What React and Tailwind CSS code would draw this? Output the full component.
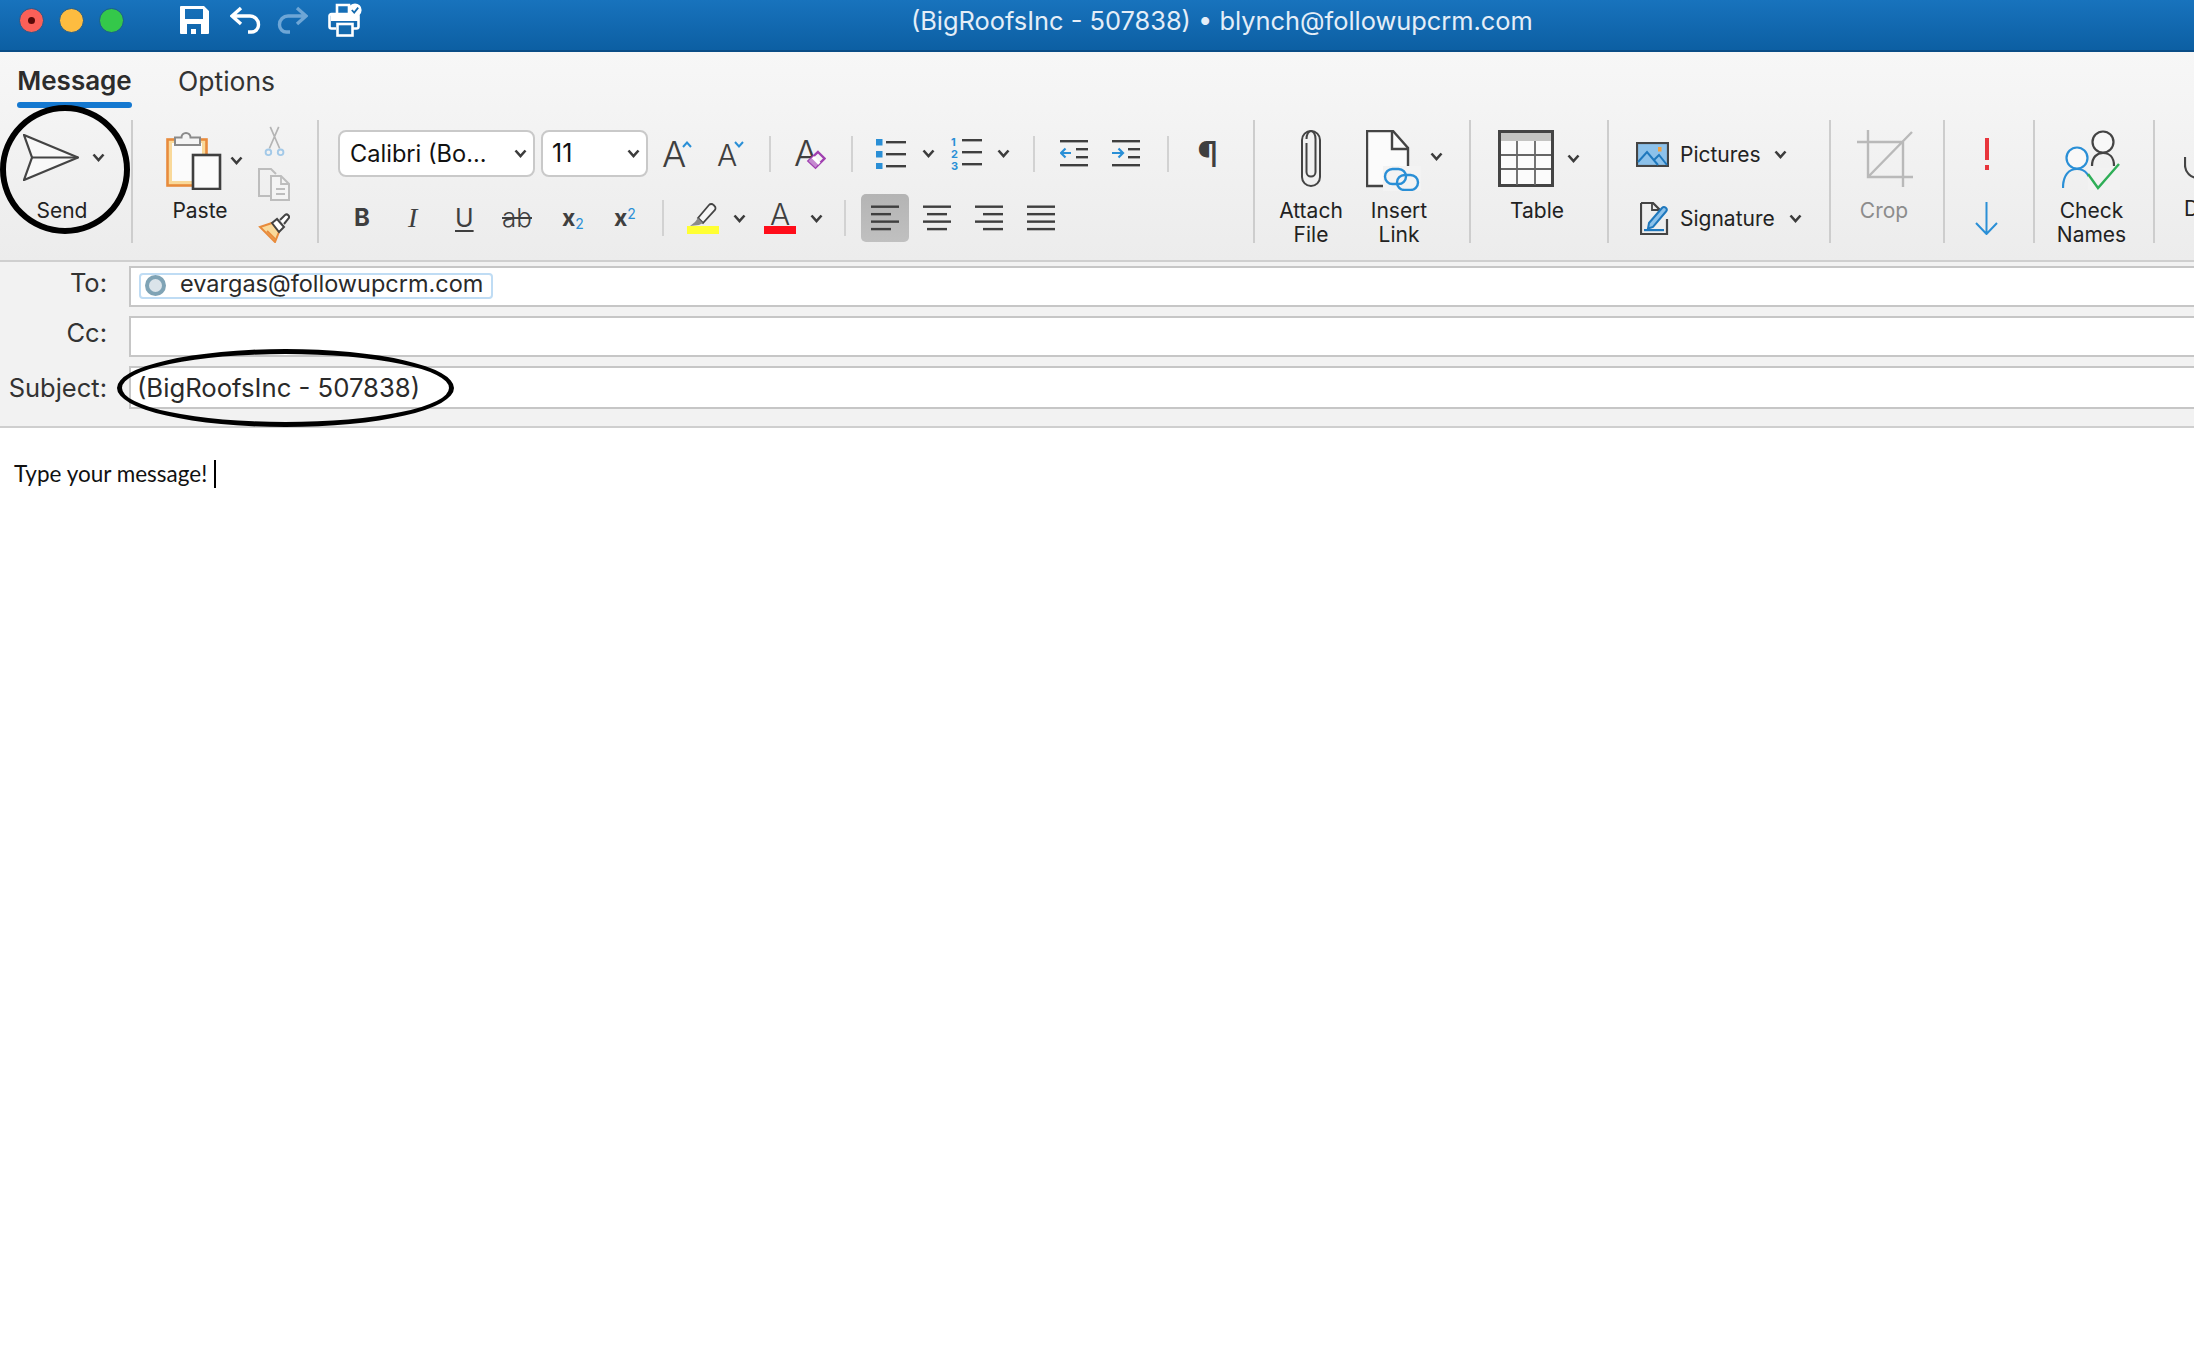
const stroke = '#444444';

const Chevron = ({ className = '' }) => (
  <svg width="13" height="9" viewBox="0 0 13 9" className={`shrink-0 ${className}`}>
    <polyline points="1.5,1.5 6.5,7 11.5,1.5" fill="none" stroke="#3c3c3c" strokeWidth="2.6" />
  </svg>
);

const Sep = () => <div className="w-[2px] h-[123px] shrink-0 bg-[#cdcdcd]" />;
const SmallSep = ({ className = '' }) => <div className={`w-[2px] h-[36px] shrink-0 bg-[#d2d2d2] ${className}`} />;

const SaveIcon = () => (
  <svg width="29" height="28" viewBox="0 0 29 28" className="ml-[56px] shrink-0">
    <path fillRule="evenodd" fill="#fff" d="M1 0h23l5 5v22a1 1 0 0 1-1 1H1a1 1 0 0 1-1-1V1a1 1 0 0 1 1-1zM5 3v10h18V3zM7 18v10h4v-5h5v5h5V18z" />
  </svg>
);

const UndoIcon = ({ color = '#fff', flip = false, className = '' }) => (
  <svg width="31" height="28" viewBox="0 0 31 28" className={`shrink-0 ${flip ? '-scale-x-100' : ''} ${className}`}>
    <path d="M11 2L2 10l9 8M2 10h18a8.5 8.5 0 0 1 8.5 8.5V19a7 7 0 0 1-7 7H18" fill="none" stroke={color} strokeWidth="3.4" />
  </svg>
);

const PrinterIcon = () => (
  <svg width="34" height="34" viewBox="0 0 34 34" className="ml-[20px] shrink-0">
    <path d="M9 11V2h12v9" fill="none" stroke="#fff" strokeWidth="2.6" />
    <path fill="none" stroke="#fff" strokeWidth="2.6" d="M8 25.500H3.500a2 2 0 0 1-2-2V13a2 2 0 0 1 2-2h25a2 2 0 0 1 2 2v10.500a2 2 0 0 1-2 2H25" />
    <path fill="#fff" d="M3 12h27v6H3z" />
    <rect x="9.5" y="21" width="15" height="11.5" fill="#146aae" stroke="#fff" strokeWidth="2.6" />
    <circle cx="27" cy="7" r="6.6" fill="#fff" />
    <polyline points="23.8,7 26.2,9.6 30.2,4.6" fill="none" stroke="#146aae" strokeWidth="1.8" />
  </svg>
);

const SendIcon = () => (
  <svg width="56" height="47" viewBox="0 0 56 47" className="shrink-0">
    <path d="M1 1l54 22.5L1 46l8-22.5z" fill="#f9f9f9" stroke={stroke} strokeWidth="2.2" strokeLinejoin="miter" />
    <path d="M9 23.5h46" stroke={stroke} strokeWidth="2.2" />
  </svg>
);

const PasteIcon = () => (
  <svg width="56" height="60" viewBox="0 0 56 60" className="shrink-0">
    <rect x="1.5" y="9.5" width="39" height="46" fill="#f9d99a" stroke="#e88b3c" strokeWidth="2.6" />
    <rect x="6" y="13" width="30" height="38" fill="#fbfbfb" />
    <path d="M9 15V7.5h6.5a4.5 4.5 0 0 1 9 0H34V15z" fill="#f4f4f4" stroke="#8a8a8a" strokeWidth="2" />
    <rect x="27" y="25" width="27" height="34" fill="#fbfbfb" stroke="#3f3f3f" strokeWidth="2.6" />
  </svg>
);

const ScissorsIcon = () => (
  <svg width="21" height="32" viewBox="0 0 21 32">
    <path d="M5 24L15 1M16 24L6 1" fill="none" stroke="#b4b4b4" strokeWidth="1.8" />
    <circle cx="4" cy="28" r="3" fill="none" stroke="#a3c9e8" strokeWidth="2" />
    <circle cx="17" cy="28" r="3" fill="none" stroke="#a3c9e8" strokeWidth="2" />
  </svg>
);

const CopyIcon = () => (
  <svg width="32" height="33" viewBox="0 0 32 33">
    <path d="M13 28H1V1h12l5 5" fill="none" stroke="#bdbdbd" strokeWidth="2" />
    <path d="M13 8h10l8 8v16H13z" fill="#f4f4f4" stroke="#bdbdbd" strokeWidth="2" />
    <path d="M23 8v8h8M18 21h9M18 26h9" fill="none" stroke="#bdbdbd" strokeWidth="1.8" />
  </svg>
);

const BrushIcon = () => (
  <svg width="32" height="30" viewBox="0 0 32 30">
    <path d="M2 14l12-4 7 9-4 10z" fill="#f9d99a" stroke="#e88b3c" strokeWidth="2" />
    <path d="M9 18l9 9" stroke="#e88b3c" strokeWidth="2" />
    <path d="M14 10l5-4 7 8-5 5z" fill="#fff" stroke="#444" strokeWidth="2" />
    <path d="M22 7l5-5a2.5 2.5 0 0 1 3.5 3.5L26 11" fill="#fff" stroke="#444" strokeWidth="2" />
  </svg>
);

const ListIcon = ({ widths }) => (
  <svg width="28" height="26" viewBox="0 0 28 26" className="shrink-0">
    {widths.map(([x, w], i) => (
      <rect key={i} x={x} y={i * (22.4 / (widths.length - 1)) + 0.5} width={w} height="2.4" fill="#3f3f3f" />
    ))}
  </svg>
);

const BulletsIcon = () => (
  <svg width="30" height="30" viewBox="0 0 30 30" className="shrink-0">
    {[0, 12, 24].map((y) => (
      <g key={y}>
        <rect x="0" y={y} width="6.5" height="6.5" fill="#2a8fd6" />
        <rect x="10" y={y + 2} width="20" height="2.4" fill="#3f3f3f" />
      </g>
    ))}
  </svg>
);

const NumberedIcon = () => (
  <svg width="31" height="34" viewBox="0 0 31 34" className="shrink-0 overflow-visible">
    {[0, 12, 24].map((y, i) => (
      <g key={y}>
        <text x="0" y={y + 9} fontSize="11" fontWeight="700" fontFamily="Inter, sans-serif" fill="#2a8fd6">{i + 1}</text>
        <rect x="11" y={y + 2} width="20" height="2.4" fill="#3f3f3f" />
      </g>
    ))}
  </svg>
);

const IndentIcon = ({ flip = false, className = '' }) => (
  <svg width="28" height="27" viewBox="0 0 28 27" className={`shrink-0 ${className}`}>
    <rect x="0" y="0" width="28" height="2.4" fill="#3f3f3f" />
    <rect x="16" y="8" width="12" height="2.4" fill="#3f3f3f" />
    <rect x="16" y="16" width="12" height="2.4" fill="#3f3f3f" />
    <rect x="0" y="24" width="28" height="2.4" fill="#3f3f3f" />
    {flip ? (
      <path d="M0 13h11M6.500 8.500L11 13l-4.500 4.500" fill="none" stroke="#2a8fd6" strokeWidth="2.2" />
    ) : (
      <path d="M11 13H1M5.500 8.500L1 13l4.500 4.500" fill="none" stroke="#2a8fd6" strokeWidth="2.2" />
    )}
  </svg>
);

const HighlightIcon = () => (
  <svg width="32" height="32" viewBox="0 0 32 32" className="shrink-0">
    <path d="M11 16L22 3a3 3 0 0 1 4.500 0l1 1a3 3 0 0 1 0 4.500L16 21z" fill="#f6f6f6" stroke="#444" strokeWidth="1.8" />
    <path d="M11 16l5 5-4 2-9 1 5-4z" fill="#8a8a8a" />
    <rect x="0" y="24" width="32" height="8" fill="#ffff33" />
  </svg>
);

const ClearIcon = () => (
  <div className="relative w-[32px] h-[32px] ml-[23px] shrink-0">
    <span className="block text-[36px] leading-[30px] font-light text-[#3f3f3f]">A</span>
    <svg width="20" height="20" viewBox="0 0 20 20" className="absolute right-0 bottom-0">
      <path d="M12 2l6.500 6.500-9 9L2.500 11z" fill="#f4f4f4" stroke="#a040b0" strokeWidth="2.4" />
      <path d="M8 6l6.500 6.500-2.500 2.500L5.500 8.500z" fill="#fff" />
      <path d="M2.500 11l3-3 6.500 6.500-2.500 3z" fill="#c58bd0" />
    </svg>
  </div>
);

const Paperclip = () => (
  <svg width="20" height="57" viewBox="0 0 20 57" className="shrink-0">
    <path d="M5.500 13v29a4.500 4.500 0 0 0 9 0V9a4.500 8 0 0 0-9 0M1 14v33a9 9 0 0 0 18 0V15" fill="none" stroke={stroke} strokeWidth="2" />
    <path d="M1 14V10a9 9 0 0 1 9-9 9 9 0 0 1 9 9v6" fill="none" stroke={stroke} strokeWidth="2" />
  </svg>
);

const LinkDoc = () => (
  <svg width="55" height="61" viewBox="0 0 55 61" className="shrink-0">
    <path d="M1 1h26l15 17v38H1z" fill="#fbfbfb" stroke={stroke} strokeWidth="2.4" />
    <path d="M26 1v18h16" fill="none" stroke={stroke} strokeWidth="2.4" />
    <rect x="17" y="36" width="38" height="25" fill="#f3f3f3" />
    <rect x="19" y="39" width="21" height="15" rx="7.500" fill="none" stroke="#2a8fd6" strokeWidth="2.4" />
    <rect x="31" y="45" width="21" height="15" rx="7.500" fill="none" stroke="#2a8fd6" strokeWidth="2.4" />
  </svg>
);

const TableIcon = () => (
  <svg width="56" height="57" viewBox="0 0 56 57" className="shrink-0">
    <rect x="1.500" y="1.500" width="53" height="54" fill="#fbfbfb" stroke={stroke} strokeWidth="3" />
    <rect x="3" y="3" width="50" height="8" fill="#c4c4c2" />
    <path d="M19 11v44M37 11v44M3 25h50M3 39h50" stroke="#666" strokeWidth="1.800" />
  </svg>
);

const PicturesIcon = () => (
  <svg width="33" height="25" viewBox="0 0 33 25" className="shrink-0">
    <rect x="1" y="1" width="31" height="23" fill="#8cc1ea" stroke={stroke} strokeWidth="2.200" />
    <path d="M2 20l9-10 11 13M18 18l5-5 8 10" fill="none" stroke="#1f78bd" strokeWidth="2" />
    <rect x="22" y="5" width="3.500" height="4.500" fill="#f0a040" />
  </svg>
);

const SignatureIcon = () => (
  <svg width="29" height="33" viewBox="0 0 29 33" className="shrink-0">
    <path d="M1 1h12l6 6v3M27 17v15H1V1" fill="none" stroke={stroke} strokeWidth="2.200" />
    <path d="M12 1v7h7" fill="none" stroke={stroke} strokeWidth="1.800" />
    <path d="M9 21L22 6a2.500 2.500 0 0 1 4 3.500L13 25l-5 1.500z" fill="#8cc1ea" stroke="#1f78bd" strokeWidth="2" />
    <rect x="4" y="27" width="20" height="2.200" fill="#1f78bd" />
  </svg>
);

const CropIcon = () => (
  <svg width="56" height="57" viewBox="0 0 56 57">
    <path d="M11 0v47h47M0 12h46v45M11 47L55 2" fill="none" stroke="#b9b9b9" strokeWidth="2.400" />
  </svg>
);

const CheckNames = () => (
  <svg width="59" height="60" viewBox="0 0 59 60" className="shrink-0">
    <circle cx="41" cy="12" r="10.500" fill="#f8f8f8" stroke={stroke} strokeWidth="2.200" />
    <path d="M30 36c0-9 5-13 11-13s11 4 11 13" fill="none" stroke={stroke} strokeWidth="2.200" />
    <circle cx="15" cy="28" r="10.500" fill="#f8f8f8" stroke="#2a8fd6" strokeWidth="2.200" />
    <path d="M1 58c0-13 6-19 14-19s14 6 14 19" fill="none" stroke="#2a8fd6" strokeWidth="2.200" />
    <rect x="26" y="38" width="32" height="22" fill="#f2f2f2" />
    <polyline points="26,44 36,58 57,34" fill="none" stroke="#2fae57" strokeWidth="2.400" />
  </svg>
);

const MicIcon = () => (
  <svg width="30" height="26" viewBox="0 0 30 26">
    <path d="M1 0v8a13 13 0 0 0 26 0V0" fill="none" stroke={stroke} strokeWidth="2.200" />
  </svg>
);

const Label = ({ children, className = 'text-[#222]' }) => (
  <span className={`block text-[21px] leading-[24px] text-center whitespace-pre-line ${className}`}>{children}</span>
);

const Field = ({ label, children, height, labelClass = '' }) => (
  <div className={`flex items-center ${height}`}>
    <span className={`w-[107px] text-right text-[25.5px] text-[#333] shrink-0 ${labelClass}`}>{label}</span>
    <div className="ml-[22px] flex-1 h-full flex items-center bg-white border-2 border-[#c6c6c6] border-r-0">{children}</div>
  </div>
);

export default function App() {
  return (
    <div className="relative h-screen w-full overflow-hidden flex flex-col bg-white font-['Inter',sans-serif]">
      {/* title bar */}
      <div className="h-[52px] shrink-0 flex items-center bg-linear-to-b from-[#1873bd] to-[#0c5fa3] border-b-2 border-[#0a4d87]">
        <div className="w-[911px] shrink-0 flex items-center pl-[19px] -mt-[10px]">
          <div className="flex gap-[15px] items-center">
            <div className="w-[25px] h-[25px] rounded-full bg-[#fb6058] border border-[#1a5a90] flex items-center justify-center">
              <div className="w-[7px] h-[7px] rounded-full bg-[#5a0a08]" />
            </div>
            <div className="w-[25px] h-[25px] rounded-full bg-[#fdbc40] border border-[#1a5a90]" />
            <div className="w-[25px] h-[25px] rounded-full bg-[#34c84a] border border-[#1a5a90]" />
          </div>
          <SaveIcon />
          <UndoIcon className="ml-[21px]" />
          <UndoIcon color="#6ea6d6" flip className="ml-[16px]" />
          <PrinterIcon />
        </div>
        <span className="text-[25.4px] text-[#e4eef8] whitespace-nowrap -mt-[8px]">(BigRoofsInc - 507838) • blynch@followupcrm.com</span>
      </div>

      {/* ribbon */}
      <div className="h-[210px] shrink-0 bg-linear-to-b from-[#f7f7f7] to-[#ececec] border-b-2 border-[#cfcfcf]">
        <div className="flex h-[56px] pl-[17px]">
          <div className="flex flex-col w-[115px] items-center">
            <span className="mt-[15px] text-[26px] leading-[28px] font-semibold text-[#2c2c2c] whitespace-nowrap">Message</span>
            <div className="mt-[7px] h-[6px] w-[115px] rounded-full bg-[#1478d0]" />
          </div>
          <span className="ml-[46px] mt-[15px] text-[26.5px] leading-[28px] text-[#333]">Options</span>
        </div>

        <div className="flex mt-[12px] h-[123px]">
          {/* send */}
          <div className="w-[131px] shrink-0 pt-[14px] pl-[23px]">
            <div className="flex items-center h-[47px]">
              <SendIcon />
              <Chevron className="ml-[13px]" />
            </div>
            <div className="mt-[18px] w-[64px] ml-[11px] -translate-x-[4px]"><Label>Send</Label></div>
          </div>
          <Sep />

          {/* clipboard */}
          <div className="w-[184px] shrink-0 flex pl-[33px]">
            <div className="w-[94px] shrink-0 pt-[10px]">
              <div className="flex items-center h-[60px]">
                <PasteIcon />
                <Chevron className="ml-[8px]" />
              </div>
              <div className="mt-[9px] w-[60px] ml-[4px]"><Label>Paste</Label></div>
            </div>
            <div className="flex flex-col pt-[6px] items-center w-[32px] -ml-[2px]">
              <ScissorsIcon />
              <div className="mt-[12px]"><CopyIcon /></div>
              <div className="mt-[12px]"><BrushIcon /></div>
            </div>
          </div>
          <Sep />

          {/* font and paragraph */}
          <div className="w-[934px] shrink-0 pt-[10px]">
            <div className="flex items-center h-[47px] pl-[19px]">
              <div className="w-[197px] h-[47px] shrink-0 flex items-center justify-between bg-white border-2 border-[#c9c9c9] rounded-[8px] pl-[10px] pr-[6px]">
                <span className="text-[23.6px] text-[#111] whitespace-nowrap">Calibri (Bo...</span>
                <Chevron />
              </div>
              <div className="ml-[6px] w-[107px] h-[47px] shrink-0 flex items-center justify-between bg-white border-2 border-[#c9c9c9] rounded-[8px] pl-[9px] pr-[6px]">
                <span className="text-[25px] text-[#111]">11</span>
                <Chevron />
              </div>
              <div className="ml-[14px] w-[30px] h-[30px] shrink-0 relative">
                <span className="block text-[36px] leading-[30px] font-light text-[#3f3f3f]">A</span>
                <svg width="10" height="7" viewBox="0 0 10 7" className="absolute right-0 top-[2px]"><polyline points="1,6 5,1.500 9,6" fill="none" stroke="#2a8fd6" strokeWidth="2" /></svg>
              </div>
              <div className="ml-[25px] w-[27px] h-[30px] shrink-0 relative">
                <span className="block text-[30px] leading-[32px] font-light text-[#3f3f3f]">A</span>
                <svg width="10" height="7" viewBox="0 0 10 7" className="absolute right-0 top-[2px]"><polyline points="1,1 5,5.500 9,1" fill="none" stroke="#2a8fd6" strokeWidth="2" /></svg>
              </div>
              <SmallSep className="ml-[25px]" />
              <ClearIcon />
              <SmallSep className="ml-[25px]" />
              <div className="ml-[23px]"><BulletsIcon /></div>
              <Chevron className="ml-[16px]" />
              <div className="ml-[16px]"><NumberedIcon /></div>
              <Chevron className="ml-[15px]" />
              <SmallSep className="ml-[23px]" />
              <IndentIcon className="ml-[25px]" />
              <IndentIcon flip className="ml-[24px]" />
              <SmallSep className="ml-[27px]" />
              <span className="ml-[28px] text-[36px] leading-[30px] font-normal text-[#3f3f3f]">¶</span>
            </div>

            <div className="flex items-center h-[48px] mt-[17px] text-[#3f3f3f]">
              <span className="ml-[35px] w-[17px] text-[24px] font-bold leading-none">B</span>
              <span className="ml-[37px] w-[13px] text-[28px] italic leading-none font-['Liberation_Serif',serif]">I</span>
              <span className="ml-[34px] w-[20px] text-[25px] underline underline-offset-[3px] leading-none">U</span>
              <span className="ml-[25px] w-[34px] text-[26px] font-light line-through leading-none text-center">ab</span>
              <span className="ml-[28px] w-[22px] text-[23px] font-bold leading-none">x<sub className="text-[14px] font-normal text-[#2a8fd6]">2</sub></span>
              <span className="ml-[30px] w-[22px] text-[23px] font-bold leading-none">x<sup className="text-[14px] font-normal text-[#2a8fd6]">2</sup></span>
              <SmallSep className="ml-[26px]" />
              <div className="ml-[23px]"><HighlightIcon /></div>
              <Chevron className="ml-[14px]" />
              <div className="ml-[18px] w-[32px] h-[32px] flex flex-col items-center shrink-0">
                <span className="text-[30px] leading-[24px] font-light">A</span>
                <div className="w-[32px] h-[8px] bg-[#ff0d1a]" />
              </div>
              <Chevron className="ml-[14px]" />
              <SmallSep className="ml-[21px]" />
              <div className="ml-[15px] w-[48px] h-[48px] shrink-0 flex items-center justify-center rounded-[5px] bg-linear-to-b from-[#b4b4b4] to-[#c0c0c0]">
                <ListIcon widths={[[0, 28], [0, 20], [0, 28], [0, 20]]} />
              </div>
              <div className="ml-[14px]"><ListIcon widths={[[0, 28], [4, 20], [0, 28], [4, 20]]} /></div>
              <div className="ml-[24px]"><ListIcon widths={[[0, 28], [8, 20], [0, 28], [8, 20]]} /></div>
              <div className="ml-[24px]"><ListIcon widths={[[0, 28], [0, 28], [0, 28], [0, 28]]} /></div>
            </div>
          </div>
          <Sep />

          {/* attach and link */}
          <div className="w-[214px] shrink-0 pt-[10px] flex">
            <div className="w-[92px] ml-[10px] flex flex-col items-center shrink-0">
              <div className="h-[57px]"><Paperclip /></div>
              <div className="mt-[12px]"><Label>{'Attach\nFile'}</Label></div>
            </div>
            <div className="ml-[9px] shrink-0">
              <div className="flex h-[61px] items-center">
                <LinkDoc />
                <Chevron className="ml-[9px] -mt-[8px]" />
              </div>
              <div className="mt-[8px] w-[66px]"><Label>{'Insert\nLink'}</Label></div>
            </div>
          </div>
          <Sep />

          {/* table */}
          <div className="w-[136px] shrink-0 pt-[10px] pl-[27px]">
            <div className="flex items-center h-[57px]">
              <TableIcon />
              <Chevron className="ml-[13px]" />
            </div>
            <div className="mt-[12px] w-[56px] ml-[11px]"><Label>Table</Label></div>
          </div>
          <Sep />

          {/* pictures, signature */}
          <div className="w-[220px] shrink-0 pt-[22px]">
            <div className="flex items-center h-[25px] pl-[27px]">
              <PicturesIcon />
              <span className="ml-[11px] text-[21px] text-[#222] w-[81px]">Pictures</span>
              <Chevron className="ml-[13px]" />
            </div>
            <div className="flex items-center h-[33px] pl-[31px] mt-[35px]">
              <SignatureIcon />
              <span className="ml-[11px] text-[21px] text-[#222] w-[96px]">Signature</span>
              <Chevron className="ml-[13px]" />
            </div>
          </div>
          <Sep />

          {/* crop */}
          <div className="w-[112px] shrink-0 pt-[10px] pl-[26px]">
            <CropIcon />
            <div className="mt-[12px] w-[52px] ml-[1px]"><Label className="text-[#8c8c8c]">Crop</Label></div>
          </div>
          <Sep />

          {/* importance */}
          <div className="w-[88px] shrink-0 flex flex-col items-center pt-[18px] pr-[5px]">
            <svg width="6" height="32" viewBox="0 0 6 32"><path d="M1 0h4v22H1zM1 27h4v5H1z" fill="#e8353c" /></svg>
            <svg width="23" height="33" viewBox="0 0 23 33" className="mt-[32px]"><path d="M11.500 0v31M1 21l10.500 11L22 21" fill="none" stroke="#2a8fd6" strokeWidth="2" /></svg>
          </div>
          <Sep />

          {/* check names */}
          <div className="w-[118px] shrink-0 flex flex-col items-center pt-[10px] pr-[5px]">
            <CheckNames />
            <div className="mt-[9px]"><Label>{'Check\nNames'}</Label></div>
          </div>
          <Sep />

          {/* dictate, runs off the window */}
          <div className="shrink-0 pl-[29px] pt-[37px]">
            <MicIcon />
            <div className="mt-[14px]"><Label>Dictate</Label></div>
          </div>
        </div>
      </div>

      {/* address fields */}
      <div className="h-[166px] shrink-0 bg-[#f2f2f2] border-b-2 border-[#cfcfcf] pt-[4px] flex flex-col gap-[9px]">
        <Field label="To:" height="h-[41px]" labelClass="pb-[7px]">
          <div className="ml-[8px] -mt-[2px] h-[26px] w-[354px] flex items-center border-2 border-[#bfdcf4] rounded-[4px] pl-[4px]">
            <div className="w-[21px] h-[21px] rounded-full bg-[#dbe4ea] border-[4px] border-[#7fa3b5] shrink-0" />
            <span className="ml-[14px] text-[23.5px] leading-none text-[#2a2a2a] whitespace-nowrap pb-[3px]">evargas@followupcrm.com</span>
          </div>
        </Field>
        <Field label="Cc:" height="h-[41px]" labelClass="pb-[7px]" />
        <Field label="Subject:" height="h-[43px]" labelClass="pt-[2px]">
          <span className="ml-[6px] pt-[2px] text-[25.7px] text-[#2a2a2a] whitespace-nowrap">(BigRoofsInc - 507838)</span>
        </Field>
      </div>

      {/* message body */}
      <div className="flex-1 bg-white pt-[32px] pl-[14px]">
        <div className="flex items-center h-[28px]">
          <span className="text-[22.5px] text-[#111] font-['Lato',sans-serif] whitespace-nowrap">Type your message!</span>
          <div className="ml-[7px] w-[2px] h-[28px] bg-black" />
        </div>
      </div>

      {/* hand drawn rings over the screenshot */}
      <div className="absolute left-0 top-[105px] w-[130px] h-[129px] rounded-[50%] border-[6px] border-black" />
      <div className="absolute left-[117px] top-[349px] w-[337px] h-[78px] rounded-[50%] border-[5px] border-black" />
    </div>
  );
}
